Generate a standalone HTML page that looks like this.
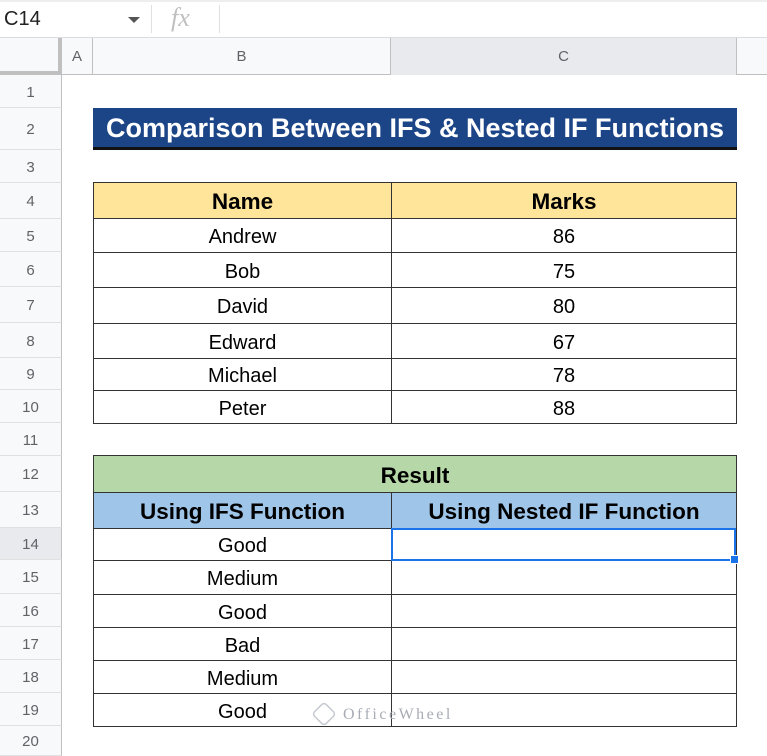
<!DOCTYPE html>
<html><head><style>
body{margin:0;width:767px;height:756px;overflow:hidden;background:#fff;font-family:"Liberation Sans",Arial,sans-serif;position:relative}
.a{position:absolute;box-sizing:border-box}
.rh{left:0;width:62px;background:#f8f9fa;border-right:1px solid #c0c0c0;border-bottom:1px solid #e0e0e0;color:#5f6368;font-size:15px;display:flex;align-items:center;justify-content:center;padding-top:2px}
.c{display:flex;align-items:center;justify-content:center;font-size:20px;color:#000;border:1px solid #333;background:#fff;padding-top:4px}
.h{font-weight:bold;font-size:22.5px;padding-top:3px}
</style></head><body>
<div class="a" style="left:0;top:0;width:767px;height:38px;background:#fff;border-bottom:1px solid #dadce0;border-top:2px solid #eee"></div>
<div class="a" style="left:4px;top:8px;font-size:20px;color:#222">C14</div>
<div class="a" style="left:128px;top:17px;width:0;height:0;border-left:6px solid transparent;border-right:6px solid transparent;border-top:6px solid #555"></div>
<div class="a" style="left:151px;top:5px;width:1px;height:28px;background:#e0e0e0"></div>
<div class="a" style="left:171px;top:3px;font-family:'Liberation Serif',serif;font-style:italic;font-size:26px;color:#c0c0c0">fx</div>
<div class="a" style="left:219px;top:5px;width:1px;height:28px;background:#e0e0e0"></div>
<div class="a" style="left:0;top:38px;width:767px;height:37px;background:#f8f9fa;border-bottom:1px solid #c0c0c0"></div>
<div class="a" style="left:0;top:38px;width:62px;height:37px;background:#f8f9fa;border-right:4px solid #c0c0c0;border-bottom:4px solid #c0c0c0"></div>
<div class="a" style="left:62px;top:38px;width:31px;height:37px;border-right:1px solid #c0c0c0;color:#5f6368;font-size:15px;display:flex;align-items:center;justify-content:center">A</div>
<div class="a" style="left:93px;top:38px;width:298px;height:37px;border-right:1px solid #c0c0c0;color:#5f6368;font-size:15px;display:flex;align-items:center;justify-content:center">B</div>
<div class="a" style="left:391px;top:38px;width:346px;height:37px;background:#e8eaed;border-right:1px solid #c0c0c0;color:#5f6368;font-size:15px;display:flex;align-items:center;justify-content:center">C</div>
<div class="a rh" style="top:75px;height:33px">1</div>
<div class="a rh" style="top:108px;height:42px">2</div>
<div class="a rh" style="top:150px;height:33px">3</div>
<div class="a rh" style="top:183px;height:36px">4</div>
<div class="a rh" style="top:219px;height:33px">5</div>
<div class="a rh" style="top:252px;height:35px">6</div>
<div class="a rh" style="top:287px;height:36px">7</div>
<div class="a rh" style="top:323px;height:35px">8</div>
<div class="a rh" style="top:358px;height:32px">9</div>
<div class="a rh" style="top:390px;height:33px">10</div>
<div class="a rh" style="top:423px;height:33px">11</div>
<div class="a rh" style="top:456px;height:36px">12</div>
<div class="a rh" style="top:492px;height:36px">13</div>
<div class="a rh" style="top:528px;height:32px;background:#e8eaed">14</div>
<div class="a rh" style="top:560px;height:34px">15</div>
<div class="a rh" style="top:594px;height:33px">16</div>
<div class="a rh" style="top:627px;height:33px">17</div>
<div class="a rh" style="top:660px;height:33px">18</div>
<div class="a rh" style="top:693px;height:33px">19</div>
<div class="a rh" style="top:726px;height:30px">20</div>
<div class="a" style="left:93px;top:108px;width:644px;height:42px;background:#1c4587;border-bottom:3px solid #111;color:#fff;font-weight:bold;font-size:27px;display:flex;align-items:center;justify-content:center;padding-top:2px">Comparison Between IFS &amp; Nested IF Functions</div>
<div class="a c h" style="left:93px;top:182px;width:299px;height:37px;background:#ffe599">Name</div>
<div class="a c h" style="left:391px;top:182px;width:346px;height:37px;background:#ffe599">Marks</div>
<div class="a c" style="left:93px;top:218px;width:299px;height:35px">Andrew</div><div class="a c" style="left:391px;top:218px;width:346px;height:35px">86</div>
<div class="a c" style="left:93px;top:252px;width:299px;height:36px">Bob</div><div class="a c" style="left:391px;top:252px;width:346px;height:36px">75</div>
<div class="a c" style="left:93px;top:287px;width:299px;height:37px">David</div><div class="a c" style="left:391px;top:287px;width:346px;height:37px">80</div>
<div class="a c" style="left:93px;top:323px;width:299px;height:36px">Edward</div><div class="a c" style="left:391px;top:323px;width:346px;height:36px">67</div>
<div class="a c" style="left:93px;top:358px;width:299px;height:33px">Michael</div><div class="a c" style="left:391px;top:358px;width:346px;height:33px">78</div>
<div class="a c" style="left:93px;top:390px;width:299px;height:34px">Peter</div><div class="a c" style="left:391px;top:390px;width:346px;height:34px">88</div>
<div class="a c h" style="left:93px;top:455px;width:644px;height:38px;background:#b6d7a8">Result</div>
<div class="a c h" style="left:93px;top:492px;width:299px;height:37px;background:#9fc5e8">Using IFS Function</div>
<div class="a c h" style="left:391px;top:492px;width:346px;height:37px;background:#9fc5e8">Using Nested IF Function</div>
<div class="a c" style="left:93px;top:528px;width:299px;height:33px">Good</div><div class="a c" style="left:391px;top:528px;width:346px;height:33px"></div>
<div class="a c" style="left:93px;top:560px;width:299px;height:35px">Medium</div><div class="a c" style="left:391px;top:560px;width:346px;height:35px"></div>
<div class="a c" style="left:93px;top:594px;width:299px;height:34px">Good</div><div class="a c" style="left:391px;top:594px;width:346px;height:34px"></div>
<div class="a c" style="left:93px;top:627px;width:299px;height:34px">Bad</div><div class="a c" style="left:391px;top:627px;width:346px;height:34px"></div>
<div class="a c" style="left:93px;top:660px;width:299px;height:34px">Medium</div><div class="a c" style="left:391px;top:660px;width:346px;height:34px"></div>
<div class="a c" style="left:93px;top:693px;width:299px;height:34px">Good</div><div class="a c" style="left:391px;top:693px;width:346px;height:34px"></div>
<div class="a" style="left:391px;top:528px;width:345px;height:33px;border:2px solid #1a73e8"></div>
<div class="a" style="left:730px;top:555px;width:9px;height:9px;background:#1a73e8;border:1px solid #fff"></div>
<div class="a" style="left:312px;top:702px;width:24px;height:24px;border:2px solid #b8bcc4;border-radius:5px;transform:rotate(45deg) scale(.75);opacity:.8"></div>
<div class="a" style="left:343px;top:706px;font-family:'Liberation Serif',serif;font-size:16px;letter-spacing:2.5px;color:#a8acb4">OfficeWheel</div>
</body></html>
